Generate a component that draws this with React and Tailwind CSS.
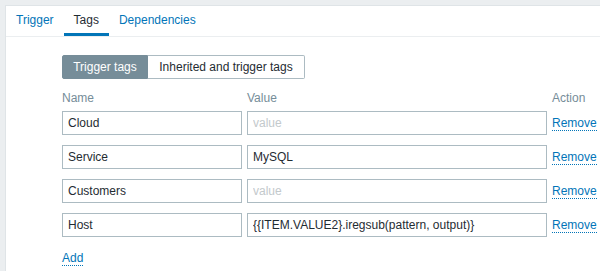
import React, { useState } from "react";

const tags = [
  { name: "Cloud", value: "" },
  { name: "Service", value: "MySQL" },
  { name: "Customers", value: "" },
  { name: "Host", value: "{{ITEM.VALUE2}.iregsub(pattern, output)}" },
];

function Tabs() {
  const items = ["Trigger", "Tags", "Dependencies"];
  return (
    <ul className="flex h-[31px] border-b border-[#ebeef0]">
      {items.map((t) => (
        <li
          key={t}
          className={
            t === "Tags"
              ? "px-[10px] pt-[7px] text-[#1f2c33] border-b-[3px] border-[#0275b8]"
              : "px-[10px] pt-[7px] text-[#0275b8]"
          }
        >
          {t}
        </li>
      ))}
    </ul>
  );
}

export default function App() {
  const [mode, setMode] = useState("trigger");

  return (
    <div
      className="w-[600px] h-[271px] overflow-hidden bg-[#ebeef0] pt-[5px] pl-[5px] text-[12px] leading-[14px]"
      style={{ fontFamily: '"Liberation Sans", Arial, sans-serif' }}
    >
      <div className="h-full bg-white border-t border-l border-[#dfe4e7]">
        <Tabs />

        <div className="pl-[56px] pt-[18px]">
          {/* radio toggle */}
          <div className="flex h-[24px]">
            <button
              type="button"
              onClick={() => setMode("trigger")}
              className={
                mode === "trigger"
                  ? "w-[86px] rounded-l-[2px] border border-[#768d99] bg-[#768d99] text-white"
                  : "w-[86px] rounded-l-[2px] border border-[#acbbc2] bg-white text-[#1f2c33]"
              }
            >
              Trigger tags
            </button>
            <button
              type="button"
              onClick={() => setMode("inherited")}
              className={
                mode === "inherited"
                  ? "w-[157px] rounded-r-[2px] border border-l-0 border-[#768d99] bg-[#768d99] text-white"
                  : "w-[157px] rounded-r-[2px] border border-l-0 border-[#acbbc2] bg-white text-[#1f2c33]"
              }
            >
              Inherited and trigger tags
            </button>
          </div>

          {/* header */}
          <div className="grid grid-cols-[180px_300px_auto] gap-x-[5px] mt-[12px] text-[#768d99]">
            <div>Name</div>
            <div>Value</div>
            <div>Action</div>
          </div>

          {/* rows */}
          <div className="mt-[6px] flex flex-col gap-[10px]">
            {tags.map((t, i) => (
              <div key={i} className="grid grid-cols-[180px_300px_auto] gap-x-[5px] items-center">
                <input
                  defaultValue={t.name}
                  placeholder="tag"
                  className="h-[24px] px-[5px] border border-[#acbbc2] text-[#1f2c33] outline-none placeholder:text-[#c3c9cc]"
                />
                <input
                  defaultValue={t.value}
                  placeholder="value"
                  className="h-[24px] px-[5px] border border-[#acbbc2] text-[#1f2c33] outline-none placeholder:text-[#c3c9cc]"
                />
                <div className="whitespace-nowrap">
                  <span className="text-[#0275b8] border-b border-dotted border-[#0275b8]">Remove</span>
                </div>
              </div>
            ))}
          </div>

          <div className="mt-[14px]">
            <span className="text-[#0275b8] border-b border-dotted border-[#0275b8]">Add</span>
          </div>
        </div>
      </div>
    </div>
  );
}
